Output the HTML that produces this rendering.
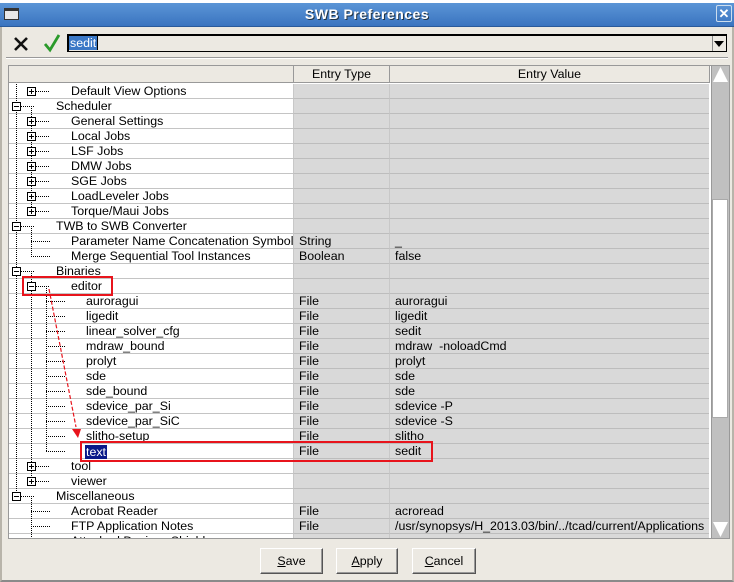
<!DOCTYPE html>
<html><head><style>
*{margin:0;padding:0;box-sizing:border-box}
body{width:734px;height:582px;overflow:hidden;background:#ece9e2;font-family:"Liberation Sans",sans-serif;font-size:12.4px;position:relative;color:#000}
.a{position:absolute}
.title{left:0;top:3px;width:734px;height:24px;background:linear-gradient(#5b95d6,#3a74c0);border-bottom:1px solid #2a5a9a}
.r{position:absolute;left:10px;width:700px;height:15px;line-height:15px;white-space:nowrap}
.r .t{position:absolute;left:0;width:284px;height:15px;background:#fff;border-bottom:1px solid #c4c4c4}
.r .e{position:absolute;left:284px;width:96px;height:15px;background:#d9d9d9;border-bottom:1px solid #bdbdbd;border-left:1px solid #c8c8c8;padding-left:5px}
.r .v{position:absolute;left:380px;width:320px;height:15px;background:#d9d9d9;border-bottom:1px solid #bdbdbd;border-left:1px solid #c8c8c8;padding-left:5px;overflow:hidden}
.r span.n{position:absolute;top:0;margin-left:1px}
.btn{position:absolute;top:548px;height:26px;background:#ece9e2;border:1px solid;border-color:#fff #555 #555 #fff;box-shadow:inset -1px -1px #999;text-align:center;line-height:24px;font-size:12.4px}
</style></head><body>
<div class="a" style="left:0;top:0;width:734px;height:3px;background:#fff"></div>
<div class="a title"></div>
<div class="a" style="left:4px;top:8px;width:15px;height:12px;border:1px solid #333;background:#e8e8e8;border-top:3px solid #333"></div>
<div class="a" style="left:0;top:6px;width:734px;text-align:center;color:#fff;font-weight:bold;font-size:14px;letter-spacing:0.5px;text-shadow:1px 1px #234">SWB Preferences</div>
<div class="a" style="left:716px;top:5px;width:16px;height:17px;border:1px solid #cde;border-radius:2px;color:#fff;font-weight:bold;font-size:13px;text-align:center;line-height:15px">✕</div>
<div class="a" style="left:0;top:27px;width:734px;height:555px;border-left:2px solid #b8b4aa;border-right:2px solid #b8b4aa;border-bottom:2px solid #8a8a8a"></div>
<svg class="a" style="left:13px;top:36px" width="16" height="16"><path d="M2 2L14 14M14 2L2 14" stroke="#111" stroke-width="2.6"/></svg>
<svg class="a" style="left:43px;top:33px" width="18" height="20"><path d="M2 11L7 17L16 2" stroke="#2a9a2a" stroke-width="2.8" fill="none"/></svg>
<div class="a" style="left:67px;top:34px;width:660px;height:18px;border:1px solid #000;border-top-width:2px;border-left-width:2px;background:#ece9e2"></div>
<div class="a" style="left:69px;top:36px;width:29px;height:14px;background:#3b78c6;color:#fff;line-height:14px;padding-left:1px">sedit</div>
<div class="a" style="left:97px;top:36px;width:1px;height:14px;background:#000"></div>
<div class="a" style="left:712px;top:36px;width:14px;height:15px;border-left:1px solid #888;background:#ece9e2"></div>
<svg class="a" style="left:713px;top:40px" width="12" height="8"><path d="M1 1L11 1L6 7Z" fill="#000"/></svg>
<div class="a" style="left:6px;top:57px;width:722px;height:2px;border-top:1px solid #999;border-bottom:1px solid #fff"></div>
<div class="a" style="left:8px;top:65px;width:722px;height:474px;border:1px solid #999;background:#fff"></div>
<div class="a" style="left:9px;top:66px;width:285px;height:17px;background:#ece9e2;border-right:1px solid #999;border-bottom:1px solid #999"></div>
<div class="a" style="left:294px;top:66px;width:96px;height:17px;background:#ece9e2;border-right:1px solid #999;border-bottom:1px solid #999;text-align:center;line-height:16px">Entry Type</div>
<div class="a" style="left:390px;top:66px;width:320px;height:17px;background:#ece9e2;border-right:1px solid #999;border-bottom:1px solid #999;text-align:center;line-height:16px">Entry Value</div>
<div class="a" style="left:9px;top:84px;width:701px;height:454px;overflow:hidden">
<div style="position:relative;left:-10px;top:-84px">
<div class="r" style="top:84px"><div class="t"><span class="n" style="left:61px">Default View Options</span></div><div class="e"></div><div class="v"></div></div>
<div class="r" style="top:99px"><div class="t"><span class="n" style="left:46px">Scheduler</span></div><div class="e"></div><div class="v"></div></div>
<div class="r" style="top:114px"><div class="t"><span class="n" style="left:61px">General Settings</span></div><div class="e"></div><div class="v"></div></div>
<div class="r" style="top:129px"><div class="t"><span class="n" style="left:61px">Local Jobs</span></div><div class="e"></div><div class="v"></div></div>
<div class="r" style="top:144px"><div class="t"><span class="n" style="left:61px">LSF Jobs</span></div><div class="e"></div><div class="v"></div></div>
<div class="r" style="top:159px"><div class="t"><span class="n" style="left:61px">DMW Jobs</span></div><div class="e"></div><div class="v"></div></div>
<div class="r" style="top:174px"><div class="t"><span class="n" style="left:61px">SGE Jobs</span></div><div class="e"></div><div class="v"></div></div>
<div class="r" style="top:189px"><div class="t"><span class="n" style="left:61px">LoadLeveler Jobs</span></div><div class="e"></div><div class="v"></div></div>
<div class="r" style="top:204px"><div class="t"><span class="n" style="left:61px">Torque/Maui Jobs</span></div><div class="e"></div><div class="v"></div></div>
<div class="r" style="top:219px"><div class="t"><span class="n" style="left:46px">TWB to SWB Converter</span></div><div class="e"></div><div class="v"></div></div>
<div class="r" style="top:234px"><div class="t"><span class="n" style="left:61px">Parameter Name Concatenation Symbol</span></div><div class="e">String</div><div class="v">_</div></div>
<div class="r" style="top:249px"><div class="t"><span class="n" style="left:61px">Merge Sequential Tool Instances</span></div><div class="e">Boolean</div><div class="v">false</div></div>
<div class="r" style="top:264px"><div class="t"><span class="n" style="left:46px">Binaries</span></div><div class="e"></div><div class="v"></div></div>
<div class="r" style="top:279px"><div class="t"><span class="n" style="left:61px">editor</span></div><div class="e"></div><div class="v"></div></div>
<div class="r" style="top:294px"><div class="t"><span class="n" style="left:76px">auroragui</span></div><div class="e">File</div><div class="v">auroragui</div></div>
<div class="r" style="top:309px"><div class="t"><span class="n" style="left:76px">ligedit</span></div><div class="e">File</div><div class="v">ligedit</div></div>
<div class="r" style="top:324px"><div class="t"><span class="n" style="left:76px">linear_solver_cfg</span></div><div class="e">File</div><div class="v">sedit</div></div>
<div class="r" style="top:339px"><div class="t"><span class="n" style="left:76px">mdraw_bound</span></div><div class="e">File</div><div class="v">mdraw&nbsp; -noloadCmd</div></div>
<div class="r" style="top:354px"><div class="t"><span class="n" style="left:76px">prolyt</span></div><div class="e">File</div><div class="v">prolyt</div></div>
<div class="r" style="top:369px"><div class="t"><span class="n" style="left:76px">sde</span></div><div class="e">File</div><div class="v">sde</div></div>
<div class="r" style="top:384px"><div class="t"><span class="n" style="left:76px">sde_bound</span></div><div class="e">File</div><div class="v">sde</div></div>
<div class="r" style="top:399px"><div class="t"><span class="n" style="left:76px">sdevice_par_Si</span></div><div class="e">File</div><div class="v">sdevice -P</div></div>
<div class="r" style="top:414px"><div class="t"><span class="n" style="left:76px">sdevice_par_SiC</span></div><div class="e">File</div><div class="v">sdevice -S</div></div>
<div class="r" style="top:429px"><div class="t"><span class="n" style="left:76px">slitho-setup</span></div><div class="e">File</div><div class="v">slitho</div></div>
<div class="r" style="top:444px"><div class="t"><span class="n" style="left:75px;background:#0a1a8a;color:#fff;padding:0 1px;line-height:14px;top:1px">text</span></div><div class="e">File</div><div class="v">sedit</div></div>
<div class="r" style="top:459px"><div class="t"><span class="n" style="left:61px">tool</span></div><div class="e"></div><div class="v"></div></div>
<div class="r" style="top:474px"><div class="t"><span class="n" style="left:61px">viewer</span></div><div class="e"></div><div class="v"></div></div>
<div class="r" style="top:489px"><div class="t"><span class="n" style="left:46px">Miscellaneous</span></div><div class="e"></div><div class="v"></div></div>
<div class="r" style="top:504px"><div class="t"><span class="n" style="left:61px">Acrobat Reader</span></div><div class="e">File</div><div class="v">acroread</div></div>
<div class="r" style="top:519px"><div class="t"><span class="n" style="left:61px">FTP Application Notes</span></div><div class="e">File</div><div class="v">/usr/synopsys/H_2013.03/bin/../tcad/current/Applications</div></div>
<div class="r" style="top:534px"><div class="t"><span class="n" style="left:61px">Attached Devices Shield</span></div><div class="e"></div><div class="v"></div></div>
</div></div>
<svg class="a" style="left:0;top:84px" width="294" height="454" viewBox="0 84 294 454">
<g stroke="#000" stroke-dasharray="1 1" fill="none">
<path d="M16.5 84V496"/>
<path d="M21 106.5H34M21 226.5H34M21 271.5H34M21 496.5H34"/>
<path d="M31.5 106V211.5M31.5 226V256.5M31.5 271V481.5M31.5 496V540"/>
<path d="M36 91.5H50M36 121.5H50M36 136.5H50M36 151.5H50M36 166.5H50M36 181.5H50M36 196.5H50M36 211.5H50M31 241.5H50M31 256.5H50M36 286.5H50M36 466.5H50M36 481.5H50M31 511.5H50M31 526.5H50"/>
<path d="M46.5 286V451.5"/>
<path d="M46 301.5H65M46 316.5H65M46 331.5H65M46 346.5H65M46 361.5H65M46 376.5H65M46 391.5H65M46 406.5H65M46 421.5H65M46 436.5H65M46 451.5H65"/>
</g>
<g stroke="#000" fill="#fff">
<rect x="12.5" y="102.5" width="8" height="8"/><rect x="12.5" y="222.5" width="8" height="8"/><rect x="12.5" y="267.5" width="8" height="8"/><rect x="12.5" y="492.5" width="8" height="8"/>
<rect x="27.5" y="87.5" width="8" height="8"/><rect x="27.5" y="117.5" width="8" height="8"/><rect x="27.5" y="132.5" width="8" height="8"/><rect x="27.5" y="147.5" width="8" height="8"/><rect x="27.5" y="162.5" width="8" height="8"/><rect x="27.5" y="177.5" width="8" height="8"/><rect x="27.5" y="192.5" width="8" height="8"/><rect x="27.5" y="207.5" width="8" height="8"/><rect x="27.5" y="282.5" width="8" height="8"/><rect x="27.5" y="462.5" width="8" height="8"/><rect x="27.5" y="477.5" width="8" height="8"/>
</g>
<g stroke="#000">
<path d="M14 106.5H19M14 226.5H19M14 271.5H19M14 496.5H19M29 286.5H34"/>
<path d="M29 91.5H34M31.5 89V94M29 121.5H34M31.5 119V124M29 136.5H34M31.5 134V139M29 151.5H34M31.5 149V154M29 166.5H34M31.5 164V169M29 181.5H34M31.5 179V184M29 196.5H34M31.5 194V199M29 211.5H34M31.5 209V214M29 466.5H34M31.5 464V469M29 481.5H34M31.5 479V484"/>
</g>
</svg>
<div class="a" style="left:711px;top:66px;width:18px;height:472px;background:#c0c0c0;border-left:1px solid #999"></div>
<div class="a" style="left:712px;top:199px;width:16px;height:219px;background:#fff;border:1px solid #aaa"></div>
<svg class="a" style="left:712px;top:66px" width="17" height="17"><path d="M8.5 1L16 16H1Z" fill="#fff"/></svg>
<svg class="a" style="left:712px;top:521px" width="17" height="17"><path d="M1 1H16L8.5 16Z" fill="#fff"/></svg>
<div class="a" style="left:22px;top:276px;width:91px;height:20px;border:2px solid #e8141c"></div>
<div class="a" style="left:80px;top:441px;width:353px;height:21px;border:2px solid #e8141c"></div>
<svg class="a" style="left:40px;top:285px" width="50" height="160"><path d="M9 4L36 142" stroke="#e8141c" stroke-width="1.2" stroke-dasharray="4 2" fill="none"/><path d="M32 144L41 144L38 153Z" fill="#e8141c"/></svg>
<div class="btn" style="left:260px;width:63px"><u>S</u>ave</div>
<div class="btn" style="left:336px;width:62px"><u>A</u>pply</div>
<div class="btn" style="left:412px;width:64px"><u>C</u>ancel</div>
</body></html>
